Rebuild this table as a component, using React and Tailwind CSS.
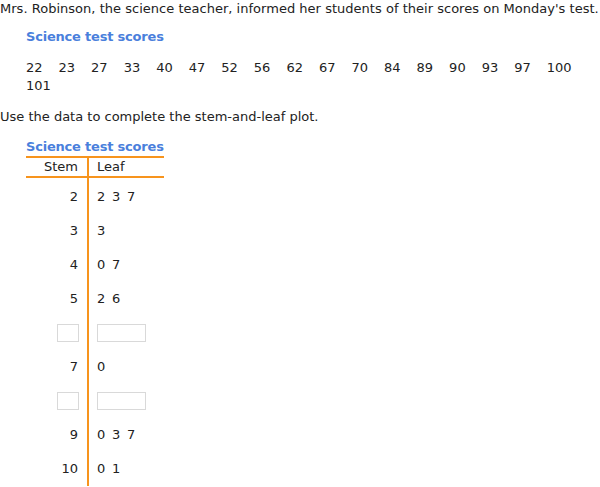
import React from "react";

const scores = [22, 23, 27, 33, 40, 47, 52, 56, 62, 67, 70, 84, 89, 90, 93, 97, 100, 101];

const rows = [
  { stem: "2", leaf: "2 3 7" },
  { stem: "3", leaf: "3" },
  { stem: "4", leaf: "0 7" },
  { stem: "5", leaf: "2 6" },
  { input: true },
  { stem: "7", leaf: "0" },
  { input: true },
  { stem: "9", leaf: "0 3 7" },
  { stem: "10", leaf: "0 1" },
];

export default function App() {
  return (
    <div className="w-[600px] h-[487px] overflow-hidden bg-white text-[13px] leading-[18px] text-[#222]" style={{ fontFamily: '"DejaVu Sans", Verdana, sans-serif' }}>
      <p className="whitespace-nowrap tracking-[0.02px]">Mrs. Robinson, the science teacher, informed her students of their scores on Monday's test.</p>
      <div className="pl-[26px] mt-[10px]">
        <div className="font-bold text-[#4a7fdc] tracking-[-0.2px]">Science test scores</div>
        <div className="mt-[13px] flex flex-wrap gap-x-[16px] w-[574px]">
          {scores.map((s) => (
            <span key={s}>{s}</span>
          ))}
        </div>
      </div>
      <p className="mt-[13px]">Use the data to complete the stem-and-leaf plot.</p>
      <div className="pl-[26px] mt-[12px]">
        <div className="w-[138px]">
          <div className="font-bold text-[#4a7fdc] border-b-2 border-[#f7941d] whitespace-nowrap tracking-[-0.2px]">Science test scores</div>
          <div className="grid grid-cols-[61px_2px_75px] border-b-2 border-[#f7941d]">
            <div className="text-right pr-[9px]">Stem</div>
            <div className="bg-[#f7941d]" />
            <div className="pl-[8px]">Leaf</div>
          </div>
          <div className="grid grid-cols-[61px_2px_75px] pt-[2px]">
            <div className="flex flex-col">
              {rows.map((r, i) => (
                <div key={i} className="h-[34px] flex items-center justify-end pr-[8px]">
                  {r.input ? (
                    <div className="w-[22px] h-[18px] border border-[#d9d9d9] bg-white" />
                  ) : (
                    <span className="pr-[1px]">{r.stem}</span>
                  )}
                </div>
              ))}
            </div>
            <div className="bg-[#f7941d] -mt-[2px]" />
            <div className="flex flex-col">
              {rows.map((r, i) => (
                <div key={i} className="h-[34px] flex items-center pl-[8px]">
                  {r.input ? (
                    <div className="w-[49px] h-[18px] border border-[#d9d9d9] bg-white" />
                  ) : (
                    <span className="whitespace-pre">{r.leaf.split(" ").join(" \u2009")}</span>
                  )}
                </div>
              ))}
            </div>
          </div>
        </div>
      </div>
    </div>
  );
}
